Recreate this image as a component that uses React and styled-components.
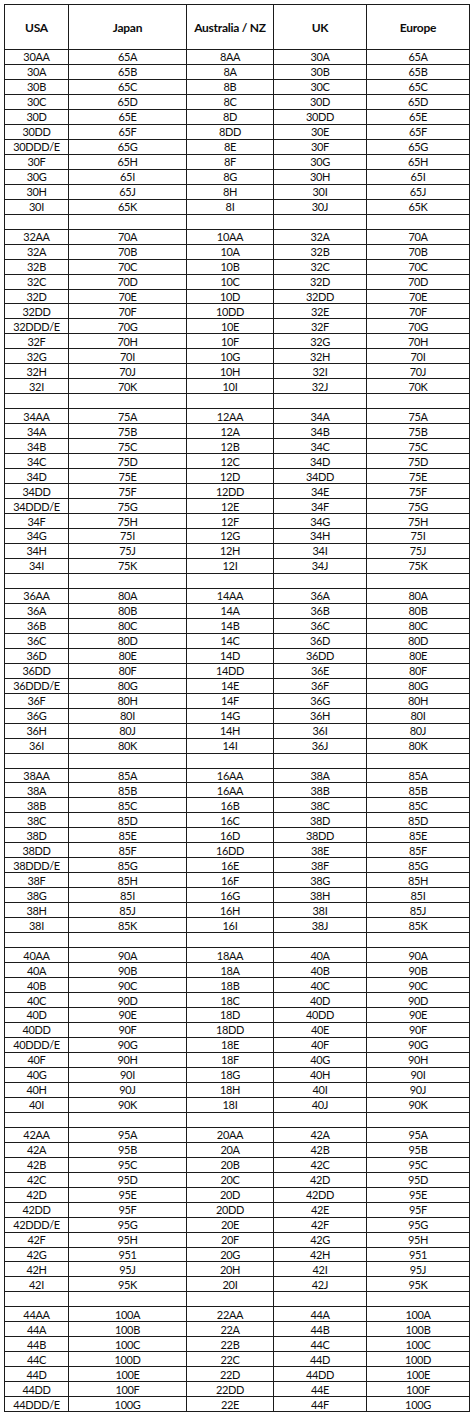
import React from 'react';
import styled, { createGlobalStyle } from 'styled-components';

const GlobalStyle = createGlobalStyle`
	html, body {
		margin: 0;
		padding: 0;
		background: #fff;
	}
	body {
		font-family: Lato, "Open Sans", sans-serif;
		color: #111;
	}
`;

const Page = styled.div`
	padding: 4px 0 0 4px;
	width: 474px;
	box-sizing: border-box;
`;

const Table = styled.table`
	border-collapse: collapse;
	table-layout: fixed;
	width: 465px;
	border: 1.5px solid #1b1b1b;
`;

const HeadCell = styled.th`
	height: 44px;
	padding: 0;
	border: 1px solid #1b1b1b;
	font-size: 12px;
	font-weight: 700;
	letter-spacing: -0.25px;
	text-align: center;
	vertical-align: middle;
	color: #0d0d0d;
`;

const Row = styled.tr`
	height: 14.97px;
`;

const Cell = styled.td`
	height: 13.97px;
	padding: 0;
	border: 1px solid #1b1b1b;
	font-size: 11px;
	line-height: 13px;
	letter-spacing: -0.35px;
	text-align: center;
	vertical-align: middle;
	white-space: nowrap;
	overflow: hidden;
	color: #0d0d0d;
`;

const columns = [
	{ label: 'USA', width: 64 },
	{ label: 'Japan', width: 118 },
	{ label: 'Australia / NZ', width: 87 },
	{ label: 'UK', width: 93 },
	{ label: 'Europe', width: 103 },
];

const usCups = ['AA', 'A', 'B', 'C', 'D', 'DD', 'DDD/E', 'F', 'G', 'H', 'I'];
const jpCups = ['A', 'B', 'C', 'D', 'E', 'F', 'G', 'H', 'I', 'J', 'K'];
const auCups = ['AA', 'A', 'B', 'C', 'D', 'DD', 'E', 'F', 'G', 'H', 'I'];
const ukCups = ['A', 'B', 'C', 'D', 'DD', 'E', 'F', 'G', 'H', 'I', 'J'];

const buildGroup = (band) => {
	const step = (band - 30) / 2;
	const jp = 65 + step * 5;
	const au = 8 + step * 2;
	const count = band === 44 ? 7 : 11;
	const rows = [];
	for (let i = 0; i < count; i++) {
		let jpCup = `${jp}${jpCups[i]}`;
		let auCup = `${au}${auCups[i]}`;
		// the source sheet has a couple of typos, kept as they are
		if (band === 42 && i === 8) jpCup = '951';
		if (band === 38 && i === 1) auCup = '16AA';
		rows.push([`${band}${usCups[i]}`, jpCup, auCup, `${band}${ukCups[i]}`, jpCup]);
	}
	return rows;
};

const bands = [30, 32, 34, 36, 38, 40, 42, 44];

const App = () => {
	return (
		<Page>
			<GlobalStyle />
			<Table>
				<colgroup>
					{columns.map(col => <col key={col.label} style={{ width: col.width }} />)}
				</colgroup>
				<thead>
					<tr>
						{columns.map(col => <HeadCell key={col.label}>{col.label}</HeadCell>)}
					</tr>
				</thead>
				<tbody>
					{bands.map((band, idx) => (
						<React.Fragment key={band}>
							{idx > 0 && (
								<Row>
									{columns.map(col => <Cell key={col.label} />)}
								</Row>
							)}
							{buildGroup(band).map(row => (
								<Row key={row[0]}>
									{row.map((val, i) => <Cell key={i}>{val}</Cell>)}
								</Row>
							))}
						</React.Fragment>
					))}
				</tbody>
			</Table>
		</Page>
	);
};

export default App;
